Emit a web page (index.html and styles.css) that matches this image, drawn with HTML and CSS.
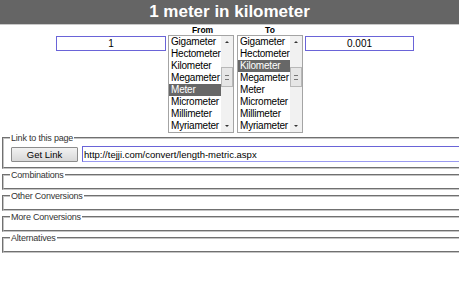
FILE: index.html
```html
<!DOCTYPE html>
<html lang="en">

<head>
    <meta charset="UTF-8">
    <title>1 meter in kilometer</title>
    <link rel="stylesheet" href="styles.css">
</head>

<body>
    <h1 class="title">1 meter in kilometer</h1>

    <div class="converter">
        <div class="col">
            <div class="label">&nbsp;</div>
            <input class="amount amount-from" type="text" value="1">
        </div>
        <div class="col">
            <div class="label">From</div>
            <div class="listbox">
                <div class="options">
                    <div class="option">Gigameter</div>
                    <div class="option">Hectometer</div>
                    <div class="option">Kilometer</div>
                    <div class="option">Megameter</div>
                    <div class="option selected">Meter</div>
                    <div class="option">Micrometer</div>
                    <div class="option">Millimeter</div>
                    <div class="option">Myriameter</div>
                </div>
                <div class="scrollbar">
                    <div class="arrow up"></div>
                    <div class="track"><div class="thumb"></div></div>
                    <div class="arrow down"></div>
                </div>
            </div>
        </div>
        <div class="col">
            <div class="label">To</div>
            <div class="listbox listbox-to">
                <div class="options">
                    <div class="option">Gigameter</div>
                    <div class="option">Hectometer</div>
                    <div class="option selected">Kilometer</div>
                    <div class="option">Megameter</div>
                    <div class="option">Meter</div>
                    <div class="option">Micrometer</div>
                    <div class="option">Millimeter</div>
                    <div class="option">Myriameter</div>
                </div>
                <div class="scrollbar">
                    <div class="arrow up"></div>
                    <div class="track"><div class="thumb"></div></div>
                    <div class="arrow down"></div>
                </div>
            </div>
        </div>
        <div class="col">
            <div class="label">&nbsp;</div>
            <input class="amount amount-to" type="text" value="0.001">
        </div>
    </div>

    <fieldset class="box">
        <legend>Link to this page</legend>
        <div class="link-row">
            <button class="get-link">Get Link</button>
            <input class="link-url" type="text" value="http://tejji.com/convert/length-metric.aspx">
        </div>
    </fieldset>

    <fieldset class="box empty">
        <legend>Combinations</legend>
    </fieldset>
    <fieldset class="box empty">
        <legend>Other Conversions</legend>
    </fieldset>
    <fieldset class="box empty">
        <legend>More Conversions</legend>
    </fieldset>
    <fieldset class="box empty">
        <legend>Alternatives</legend>
    </fieldset>
</body>

</html>
```

FILE: styles.css
```css
html,
body {
    overflow: hidden;
}

body {
    margin: 0;
    font-family: "Liberation Sans", Arial, sans-serif;
    font-size: 10px;
    color: #000;
    background: #fff;
}

.title {
    margin: 0;
    height: 24px;
    line-height: 24px;
    background: #656565;
    border-bottom: 1px solid #c8c8c8;
    color: #fff;
    font-size: 17px;
    font-weight: bold;
    text-align: center;
}

.converter {
    display: flex;
    padding-left: 56px;
}

.label {
    height: 10px;
    line-height: 10px;
    font-size: 8.5px;
    font-weight: bold;
    text-align: center;
}

.amount {
    box-sizing: border-box;
    margin: 1px 0 0;
    height: 15px;
    padding: 0 2px;
    border: 1px solid #6a64d8;
    font-family: inherit;
    font-size: 10px;
    text-align: center;
    outline: none;
}

.amount-from {
    width: 110px;
    margin-right: 2px;
}

.amount-to {
    width: 109px;
    margin-left: 2px;
}

.listbox {
    display: flex;
    width: 64px;
    height: 96px;
    margin-right: 3px;
    border: 1px solid #a4a4a4;
    overflow: hidden;
}

.listbox-to {
    margin-right: 0;
}

.options {
    flex: 1;
    overflow: hidden;
}

.option {
    height: 12px;
    line-height: 12px;
    padding-left: 2px;
    font-size: 10px;
    letter-spacing: -0.2px;
    white-space: nowrap;
}

.option.selected {
    background: #676767;
    color: #fff;
}

.scrollbar {
    display: flex;
    flex-direction: column;
    width: 12px;
    background: #f1f1f1;
}

.arrow {
    position: relative;
    height: 12px;
}

.arrow::after {
    content: "";
    position: absolute;
    left: 4px;
    top: 5px;
    border-left: 2px solid transparent;
    border-right: 2px solid transparent;
}

.arrow.up::after {
    border-bottom: 2px solid #333;
}

.arrow.down::after {
    border-top: 2px solid #333;
}

.track {
    flex: 1;
}

.thumb {
    box-sizing: border-box;
    margin-top: 19px;
    height: 20px;
    background: #e6e6e6;
    border: 1px solid #b8b8b8;
    position: relative;
}

.thumb::after {
    content: "";
    position: absolute;
    left: 3px;
    top: 7px;
    width: 4px;
    height: 3px;
    border-top: 1px solid #777;
    border-bottom: 1px solid #777;
}

.box {
    margin: 0 -30px 0 2px;
    padding: 0 6px 5px;
    border: 2px groove #c4c4c4;
    border-right: 0;
}

.box.empty {
    padding-bottom: 8px;
}

.box legend {
    padding: 0 1px;
    font-size: 9px;
    letter-spacing: -0.2px;
    color: #333;
}

.box + .box {
    margin-top: 1px;
}

.link-row {
    display: flex;
    align-items: flex-start;
    padding-top: 3px;
}

.get-link {
    box-sizing: border-box;
    width: 67px;
    height: 15px;
    margin: 1px 4px 0 1px;
    padding: 0;
    border: 1px solid #8c8c8c;
    border-radius: 1px;
    background: linear-gradient(#f2f2f2, #d8d8d8);
    font-family: inherit;
    font-size: 9.5px;
    line-height: 13px;
    color: #000;
}

.link-url {
    box-sizing: border-box;
    width: 420px;
    height: 16px;
    padding: 0 1px;
    border: 1px solid #6a64d8;
    border-bottom-color: #9a9af0;
    font-family: inherit;
    font-size: 9.5px;
    outline: none;
}
```
